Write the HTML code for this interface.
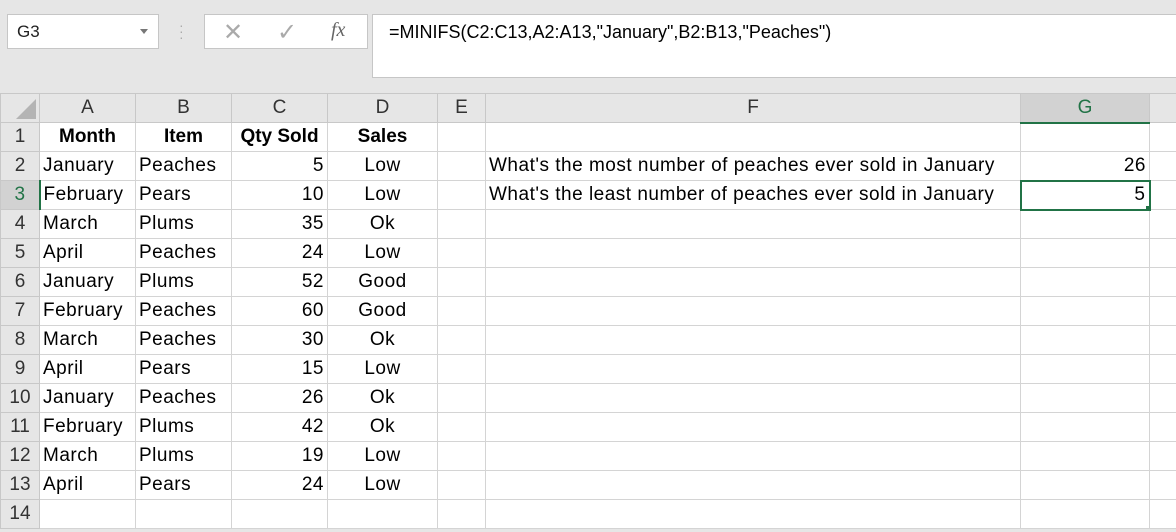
<!DOCTYPE html>
<html><head><style>
body{margin:0;width:1176px;height:532px;background:#e6e6e6;font-family:"Liberation Sans",sans-serif;position:relative;overflow:hidden}
.box{position:absolute;background:#fff;border:1px solid #c6c6c6;box-sizing:border-box}
table{position:absolute;left:0;top:93px;border-collapse:collapse;table-layout:fixed;background:#fff;width:1176px}
td{height:29px;border:1px solid #d4d4d4;padding:0 3px;font-size:19px;letter-spacing:0.5px;color:#000;white-space:nowrap;overflow:hidden;box-sizing:border-box}
tr.h td{background:#e6e6e6;text-align:center;color:#333;border-color:#c8c8c8;height:29px;letter-spacing:0}
td.rh{background:#e6e6e6;text-align:center;color:#333;border-color:#c8c8c8;padding:0;letter-spacing:0}
.r{text-align:right}.c{text-align:center}.b{font-weight:bold;text-align:center;letter-spacing:0!important}
</style></head><body>
<div class="box" style="left:7px;top:14px;width:152px;height:35px;font-size:17px;padding:7px 9px;color:#222">G3<span style="position:absolute;right:10px;top:14px;border:4px solid transparent;border-top:5px solid #777;border-bottom:0"></span></div>
<div style="position:absolute;left:179px;top:22px;color:#aaa;font-size:14px;line-height:6px">·<br>·<br>·</div>
<div class="box" style="left:204px;top:14px;width:164px;height:35px">
<span style="position:absolute;left:18px;top:3px;font-size:24px;color:#aaa">✕</span>
<span style="position:absolute;left:72px;top:3px;font-size:24px;color:#aaa">✓</span>
<span style="position:absolute;left:126px;top:4px;font-size:20px;font-style:italic;font-family:'Liberation Serif',serif;color:#666">fx</span></div>
<div class="box" style="left:372px;top:14px;width:810px;height:64px;font-size:18px;padding:7px 16px;color:#000">=MINIFS(C2:C13,A2:A13,"January",B2:B13,"Peaches")</div>
<table>
<colgroup><col style="width:39px"><col style="width:96px"><col style="width:96px"><col style="width:96px"><col style="width:110px"><col style="width:48px"><col style="width:535px"><col style="width:129px"><col style="width:27px"></colgroup>
<tr class="h"><td style="position:relative"><span style="position:absolute;right:3px;bottom:3px;border-left:20px solid transparent;border-bottom:20px solid #b4b4b4"></span></td><td>A</td><td>B</td><td>C</td><td>D</td><td>E</td><td>F</td><td style="background:#d2d2d2;color:#217346;border-bottom:2px solid #217346">G</td><td></td></tr>
<tr><td class="rh">1</td><td class="b">Month</td><td class="b">Item</td><td class="b">Qty Sold</td><td class="b">Sales</td><td></td><td></td><td></td><td></td></tr>
<tr><td class="rh">2</td><td>January</td><td>Peaches</td><td class="r">5</td><td class="c">Low</td><td></td><td>What's the most number of peaches ever sold in January</td><td class="r">26</td><td></td></tr>
<tr><td class="rh" style="background:#d2d2d2;color:#217346;border-right:2px solid #217346">3</td><td>February</td><td>Pears</td><td class="r">10</td><td class="c">Low</td><td></td><td>What's the least number of peaches ever sold in January</td><td class="r" style="border:2px solid #217346;position:relative">5<span style="position:absolute;right:-4px;bottom:-4px;width:6px;height:6px;background:#217346;border:1px solid #fff"></span></td><td></td></tr>
<tr><td class="rh">4</td><td>March</td><td>Plums</td><td class="r">35</td><td class="c">Ok</td><td></td><td></td><td></td><td></td></tr>
<tr><td class="rh">5</td><td>April</td><td>Peaches</td><td class="r">24</td><td class="c">Low</td><td></td><td></td><td></td><td></td></tr>
<tr><td class="rh">6</td><td>January</td><td>Plums</td><td class="r">52</td><td class="c">Good</td><td></td><td></td><td></td><td></td></tr>
<tr><td class="rh">7</td><td>February</td><td>Peaches</td><td class="r">60</td><td class="c">Good</td><td></td><td></td><td></td><td></td></tr>
<tr><td class="rh">8</td><td>March</td><td>Peaches</td><td class="r">30</td><td class="c">Ok</td><td></td><td></td><td></td><td></td></tr>
<tr><td class="rh">9</td><td>April</td><td>Pears</td><td class="r">15</td><td class="c">Low</td><td></td><td></td><td></td><td></td></tr>
<tr><td class="rh">10</td><td>January</td><td>Peaches</td><td class="r">26</td><td class="c">Ok</td><td></td><td></td><td></td><td></td></tr>
<tr><td class="rh">11</td><td>February</td><td>Plums</td><td class="r">42</td><td class="c">Ok</td><td></td><td></td><td></td><td></td></tr>
<tr><td class="rh">12</td><td>March</td><td>Plums</td><td class="r">19</td><td class="c">Low</td><td></td><td></td><td></td><td></td></tr>
<tr><td class="rh">13</td><td>April</td><td>Pears</td><td class="r">24</td><td class="c">Low</td><td></td><td></td><td></td><td></td></tr>
<tr><td class="rh">14</td><td></td><td></td><td></td><td></td><td></td><td></td><td></td><td></td></tr>
</table>
</body></html>
